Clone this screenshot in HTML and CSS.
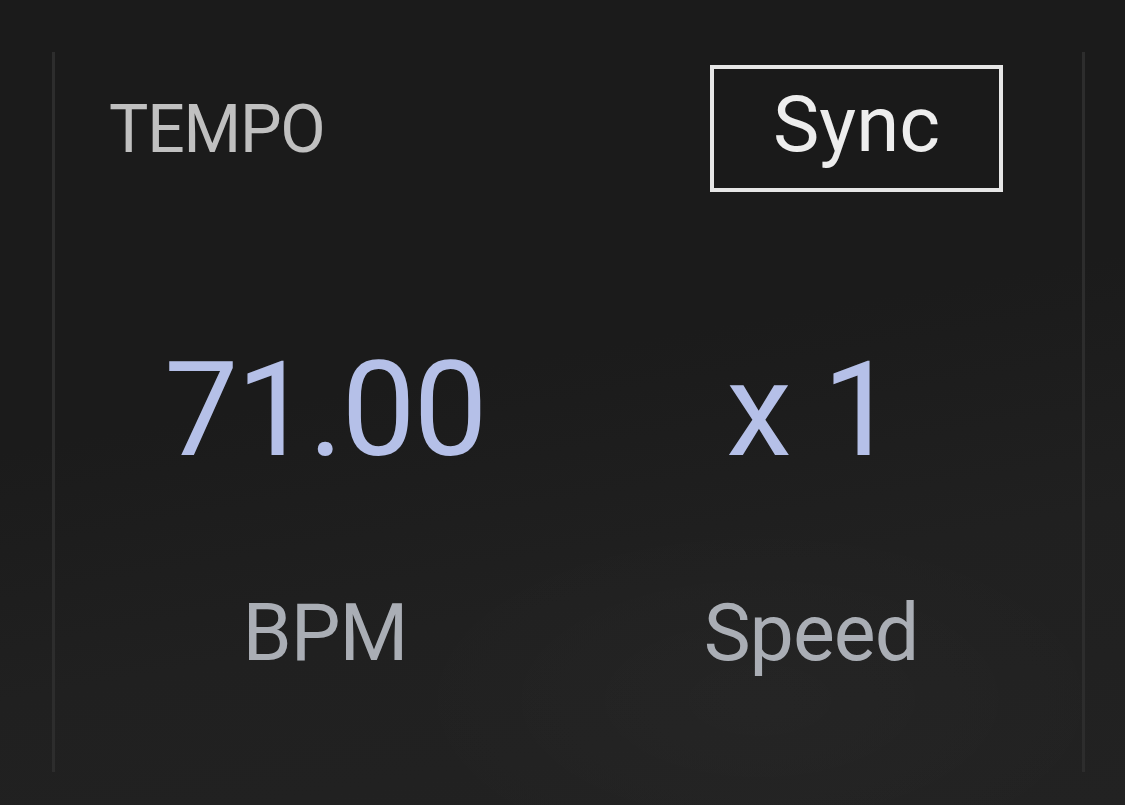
FILE: index.html
```html
<!DOCTYPE html>
<html lang="en">
<head>
<meta charset="utf-8">
<title>Tempo</title>
<link rel="stylesheet" href="styles.css">
</head>
<body>
<div class="stage">
  <section class="panel">
    <header class="panel-head">
      <span class="title">TEMPO</span>
      <button class="sync-btn" type="button">Sync</button>
    </header>
    <div class="readouts">
      <div class="value">71.00</div>
      <div class="value value-speed">x 1</div>
      <div class="label">BPM</div>
      <div class="label label-speed">Speed</div>
    </div>
  </section>
</div>
</body>
</html>
```

FILE: styles.css
```css
html, body {
  margin: 0;
  padding: 0;
}

body {
  width: 1125px;
  height: 805px;
  overflow: hidden;
  font-family: Roboto, "Liberation Sans", sans-serif;
  background: #1c1c1c;
}

.stage {
  height: 805px;
  padding: 52px 0 0 52px;
  box-sizing: border-box;
  background:
    radial-gradient(ellipse 520px 260px at 760px 700px, rgba(255,255,255,0.02), transparent 70%),
    linear-gradient(170deg, #1b1b1b 0%, #1b1b1b 45%, #202020 70%, #222222 100%);
}

.panel {
  width: 1033px;
  height: 720px;
  box-sizing: border-box;
  border-left: 3px solid #2d2d2d;
  border-right: 3px solid #2d2d2d;
  display: flex;
  flex-direction: column;
}

.panel-head {
  display: flex;
  justify-content: space-between;
  align-items: flex-start;
  padding: 13px 79px 0 54px;
}

.title {
  margin-top: 32px;
  font-size: 66px;
  line-height: 66px;
  color: #c0c0c0;
  letter-spacing: -1.2px;
}

.sync-btn {
  width: 293px;
  height: 127px;
  box-sizing: border-box;
  border: 4px solid #e6e6e6;
  background: #1a1a1a;
  color: #ededed;
  font-family: Roboto, "Liberation Sans", sans-serif;
  font-size: 78px;
  line-height: 78px;
  padding: 17px 0 24px;
  margin: 0;
  text-align: center;
}

.readouts {
  display: grid;
  grid-template-columns: 540px 432px;
  grid-template-rows: auto auto;
  row-gap: 118px;
  margin-top: 152px;
  text-align: center;
}

.value {
  font-size: 132px;
  line-height: 132px;
  color: #b5c0e8;
  letter-spacing: -2px;
}

.value-speed {
  letter-spacing: -1px;
}

.label {
  font-size: 79px;
  line-height: 79px;
  color: #aaaeb5;
  letter-spacing: -1px;
}
```
